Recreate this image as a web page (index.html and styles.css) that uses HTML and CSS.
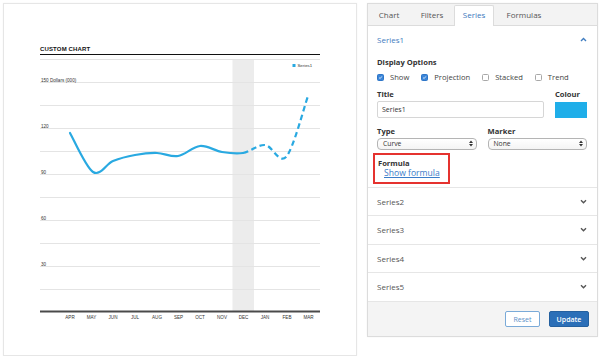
FILE: index.html
```html
<!DOCTYPE html>
<html lang="en">
<head>
<meta charset="utf-8">
<title>Custom chart editor</title>
<link rel="stylesheet" href="styles.css">
</head>
<body>
<div class="page">
  <section class="chart-card">
    <h1 class="chart-title">CUSTOM CHART</h1>
    <svg class="plot" width="280" height="270" viewBox="40 54 280 270" xmlns="http://www.w3.org/2000/svg">
      <rect x="232.5" y="58" width="21.5" height="252" fill="#ececec"/>
      <g stroke="#e4e4e4" stroke-width="1">
        <line x1="40" y1="58.5" x2="320" y2="58.5"/>
        <line x1="40" y1="81.5" x2="320" y2="81.5"/>
        <line x1="40" y1="104.5" x2="320" y2="104.5"/>
        <line x1="40" y1="127.5" x2="320" y2="127.5"/>
        <line x1="40" y1="150.5" x2="320" y2="150.5"/>
        <line x1="40" y1="173.5" x2="320" y2="173.5"/>
        <line x1="40" y1="196.5" x2="320" y2="196.5"/>
        <line x1="40" y1="219.5" x2="320" y2="219.5"/>
        <line x1="40" y1="242.5" x2="320" y2="242.5"/>
        <line x1="40" y1="265.5" x2="320" y2="265.5"/>
        <line x1="40" y1="288.5" x2="320" y2="288.5"/>
      </g>
      <line x1="40" y1="310.5" x2="320" y2="310.5" stroke="#4a4a4a" stroke-width="2"/>
      <g class="ylab">
        <text x="41" y="80.5">150 Dollars (000)</text>
        <text x="41" y="126.5">120</text>
        <text x="41" y="172.5">90</text>
        <text x="41" y="218.5">60</text>
        <text x="41" y="264.5">30</text>
      </g>
      <g class="xlab" text-anchor="middle">
        <text x="70" y="318">APR</text>
        <text x="91.5" y="318">MAY</text>
        <text x="113" y="318">JUN</text>
        <text x="135" y="318">JUL</text>
        <text x="157" y="318">AUG</text>
        <text x="178.5" y="318">SEP</text>
        <text x="200" y="318">OCT</text>
        <text x="222" y="318">NOV</text>
        <text x="243.5" y="318">DEC</text>
        <text x="265" y="318">JAN</text>
        <text x="287" y="318">FEB</text>
        <text x="308.5" y="318">MAR</text>
      </g>
      <rect x="292.5" y="63" width="3" height="3" fill="#29a9e1"/>
      <text class="legend" x="297.5" y="66.2">Series1</text>
      <path fill="none" stroke="#29a9e1" stroke-width="2.2" stroke-linecap="round"
        d="M70,132 C73.8,138.5 85.8,166.3 93,171 C100.2,175.7 106,162.8 113,160 C120,157.2 127.7,155.3 135,154 C142.3,152.7 149.8,151.8 157,152 C164.2,152.2 170.8,156.2 178,155 C185.2,153.8 192.7,145.7 200,145 C207.3,144.3 214.8,149.8 222,151 C229.2,152.2 235.8,153.2 243,152"/>
      <path fill="none" stroke="#29a9e1" stroke-width="2.2" stroke-dasharray="5.5 3.5"
        d="M243,152 C250.2,150.8 257.8,143.5 265,144 C272.2,144.5 278.8,163.2 286,156 C293.2,148.8 304.3,105 308,95"/>
    </svg>
  </section>

  <aside class="editor">
    <nav class="tabs">
      <span class="tab t-chart">Chart</span>
      <span class="tab t-filters">Filters</span>
      <span class="tab t-series active">Series</span>
      <span class="tab t-formulas">Formulas</span>
    </nav>

    <div class="acc-item open">
      <div class="acc-head">
        <span>Series1</span>
        <svg class="chev" width="7" height="5" viewBox="0 0 7 5"><path d="M1 4 L3.5 1.5 L6 4" fill="none" stroke="currentColor" stroke-width="1.4"/></svg>
      </div>
      <div class="acc-body">
        <div class="label">Display Options</div>
        <div class="checks">
          <label class="check"><span class="box on"><svg width="7" height="7" viewBox="0 0 7 7"><path d="M1.6 3.7 L3 5 L5.4 2" fill="none" stroke="#fff" stroke-width="1.1"/></svg></span>Show</label>
          <label class="check"><span class="box on"><svg width="7" height="7" viewBox="0 0 7 7"><path d="M1.6 3.7 L3 5 L5.4 2" fill="none" stroke="#fff" stroke-width="1.1"/></svg></span>Projection</label>
          <label class="check"><span class="box"></span>Stacked</label>
          <label class="check"><span class="box"></span>Trend</label>
        </div>

        <div class="grid-title">
          <div class="label">Title</div>
          <div class="label">Colour</div>
          <div class="input">Series1</div>
          <div class="swatch"></div>
        </div>

        <div class="grid-type">
          <div class="label">Type</div>
          <div class="label">Marker</div>
          <div class="select">Curve<svg class="updown" width="4" height="7" viewBox="0 0 4 7"><path d="M0 3 L2 0.5 L4 3 Z M0 4 L2 6.5 L4 4 Z" fill="#333"/></svg></div>
          <div class="select">None<svg class="updown" width="4" height="7" viewBox="0 0 4 7"><path d="M0 3 L2 0.5 L4 3 Z M0 4 L2 6.5 L4 4 Z" fill="#333"/></svg></div>
        </div>

        <div class="formula">
          <div class="label">Formula</div>
          <a class="link" href="#">Show formula</a>
        </div>
      </div>
    </div>

    <div class="acc-item"><div class="acc-head plain"><span>Series2</span><svg class="chev" width="7" height="5" viewBox="0 0 7 5"><path d="M1 1.2 L3.5 3.7 L6 1.2" fill="none" stroke="currentColor" stroke-width="1.4"/></svg></div></div>
    <div class="acc-item"><div class="acc-head plain"><span>Series3</span><svg class="chev" width="7" height="5" viewBox="0 0 7 5"><path d="M1 1.2 L3.5 3.7 L6 1.2" fill="none" stroke="currentColor" stroke-width="1.4"/></svg></div></div>
    <div class="acc-item"><div class="acc-head plain"><span>Series4</span><svg class="chev" width="7" height="5" viewBox="0 0 7 5"><path d="M1 1.2 L3.5 3.7 L6 1.2" fill="none" stroke="currentColor" stroke-width="1.4"/></svg></div></div>
    <div class="acc-item"><div class="acc-head plain"><span>Series5</span><svg class="chev" width="7" height="5" viewBox="0 0 7 5"><path d="M1 1.2 L3.5 3.7 L6 1.2" fill="none" stroke="currentColor" stroke-width="1.4"/></svg></div></div>

    <footer class="foot">
      <button class="btn btn-reset">Reset</button>
      <button class="btn btn-update">Update</button>
    </footer>
  </aside>
</div>
</body>
</html>
```

FILE: styles.css
```css
* { box-sizing: border-box; }
html, body { margin: 0; padding: 0; background: #fff; }
body { font-family: "Open Sans", "DejaVu Sans", sans-serif; color: #333; }

.page {
  display: flex;
  align-items: flex-start;
  gap: 10px;
  padding: 3px 0 0 3px;
}

/* ---------- chart card ---------- */
.chart-card {
  width: 354px;
  height: 353px;
  border: 1px solid #e6e6e6;
  box-shadow: 0 0 2px rgba(0,0,0,0.04);
  padding: 42px 0 0 36px;
}
.chart-title {
  width: 280px;
  margin: 0;
  font-family: "Liberation Sans", Arial, sans-serif;
  font-size: 6px;
  font-weight: bold;
  line-height: 7px;
  letter-spacing: 0.15px;
  color: #111;
  border-bottom: 1.5px solid #111;
  height: 8.5px;
}
.plot { display: block; margin-top: 0.5px; overflow: visible; }
.plot text { font-family: "Liberation Sans", Arial, sans-serif; fill: #333; }
.ylab text { font-size: 4.6px; }
.xlab text { font-size: 4.6px; }
.legend { font-size: 4.3px; }

/* ---------- editor panel ---------- */
.editor {
  width: 231px;
  height: 334px;
  border: 1px solid #dcdcdc;
  box-shadow: 0 0 2px rgba(0,0,0,0.05);
  display: flex;
  flex-direction: column;
  background: #fff;
}
.tabs {
  display: flex;
  align-items: flex-end;
  height: 22px;
  padding: 0;
  background: #f3f3f3;
  border-bottom: 1px solid #dcdcdc;
}
.tab {
  font-size: 8px;
  line-height: 10px;
  color: #555;
  height: 20px;
  padding-bottom: 4px;
  display: flex;
  align-items: center;
  justify-content: center;
  border: 1px solid transparent;
  border-bottom: none;
  margin-bottom: -1px;
}
.t-chart { width: 42px; }
.t-filters { width: 44px; }
.t-series { width: 40px; }
.t-formulas { width: 60px; }
.tab.active {
  background: #fff;
  border-color: #dcdcdc;
  color: #3a78bd;
  height: 21px;
  padding-top: 1px;
  border-radius: 2px 2px 0 0;
}

.acc-item { border-bottom: 1px solid #e6e6e6; }
.acc-head {
  height: 27px;
  display: flex;
  align-items: center;
  justify-content: space-between;
  padding: 0 10px 0 9px;
  font-size: 8px;
  color: #3f7cc0;
}
.acc-head.plain { height: 27.5px; color: #555; }
.chev { display: block; color: #3f7cc0; }
.acc-head.plain .chev { color: #555; }

.acc-body { padding: 4px 10px 3px 9px; }
.label {
  font-size: 7.6px;
  font-weight: bold;
  line-height: 10px;
  color: #333;
}
.checks {
  display: flex;
  gap: 12px;
  margin-top: 5px;
  height: 10px;
  align-items: center;
}
.check {
  display: flex;
  align-items: center;
  gap: 6px;
  font-size: 7.6px;
  color: #444;
  line-height: 10px;
}
.box {
  width: 7px;
  height: 7px;
  border: 1px solid #a8a8a8;
  border-radius: 1.5px;
  background: #fff;
  display: flex;
  align-items: center;
  justify-content: center;
}
.box svg { display: block; }
.box.on { background: #3b85d8; border-color: #2e76c8; }

.grid-title {
  display: grid;
  grid-template-columns: 1fr 32px;
  column-gap: 11px;
  margin-top: 7px;
}
.grid-title .label { margin-bottom: 2px; }
.input {
  height: 17px;
  border: 1px solid #d6d6d6;
  border-radius: 2px;
  font-size: 7px;
  line-height: 15px;
  padding: 0 4px;
  color: #333;
}
.swatch {
  height: 16px;
  margin-top: 1px;
  background: #1faee9;
}

.grid-type {
  display: grid;
  grid-template-columns: 1fr 1fr;
  column-gap: 11px;
  margin-top: 8px;
}
.grid-type .label { margin-bottom: 2px; }
.select {
  height: 11.5px;
  border: 1px solid #b4b4b4;
  border-radius: 4px;
  font-size: 6.8px;
  line-height: 9.5px;
  padding: 0 3px 0 5px;
  display: flex;
  align-items: center;
  justify-content: space-between;
  color: #333;
  background: linear-gradient(#fff, #f4f4f4);
}
.updown { display: block; }

.formula {
  width: 77px;
  margin: 3px 0 0 -4px;
  border: 2px solid #e5322f;
  padding: 3px 0 3px 3px;
  display: flex;
  flex-direction: column;
}
.link {
  font-size: 8.6px;
  line-height: 11px;
  color: #3a7cc9;
  text-decoration: underline;
  margin-left: 6px;
}

.foot {
  margin-top: auto;
  height: 34px;
  background: #f4f4f4;
  display: flex;
  justify-content: flex-end;
  align-items: center;
  gap: 9px;
  padding: 0 8px 0 0;
}
.btn {
  font-family: "Open Sans", "DejaVu Sans", sans-serif;
  height: 16px;
  font-size: 7px;
  border-radius: 2px;
  padding: 0;
  display: flex;
  align-items: center;
  justify-content: center;
}
.btn-reset {
  width: 35px;
  background: #fff;
  border: 1px solid #7aaad8;
  color: #5a8fc8;
}
.btn-update {
  width: 40px;
  background: #2b6fb8;
  border: 1px solid #24609f;
  color: #fff;
  font-weight: 600;
}
```
